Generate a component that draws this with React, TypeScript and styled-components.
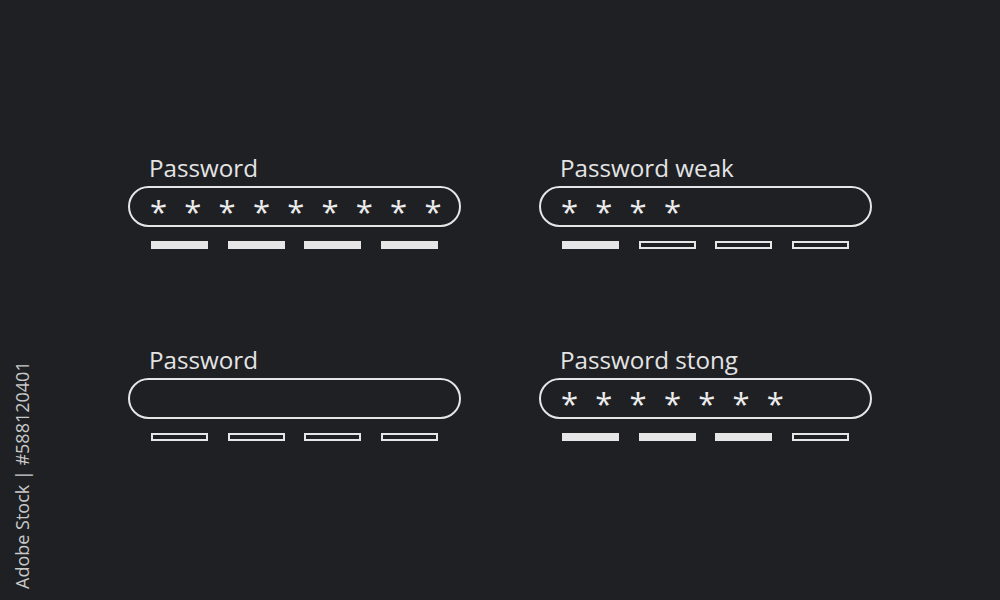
import React from 'react';
import styled, { createGlobalStyle } from 'styled-components';

const GlobalStyle = createGlobalStyle`
  html, body {
    margin: 0;
    padding: 0;
    background: #1f2024;
  }
  body {
    font-family: 'Open Sans', 'Noto Sans', sans-serif;
  }
`;

interface FieldSpec {
  id: string;
  label: string;
  length: number;
  strength: number; // filled segments out of 4
}

const FIELDS: FieldSpec[] = [
  { id: 'full', label: 'Password', length: 9, strength: 4 },
  { id: 'weak', label: 'Password weak', length: 4, strength: 1 },
  { id: 'empty', label: 'Password', length: 0, strength: 0 },
  { id: 'strong', label: 'Password stong', length: 7, strength: 3 },
];

const SEGMENTS = 4;

const Page = styled.div`
  position: relative;
  width: 1000px;
  height: 600px;
  overflow: hidden;
  background: #1f2024;
  box-sizing: border-box;
  padding: 153px 0 0 128px;
`;

const Grid = styled.div`
  display: grid;
  grid-template-columns: 333px 333px;
  column-gap: 78px;
  row-gap: 96px;
`;

const Block = styled.div`
  display: flex;
  flex-direction: column;
`;

const Label = styled.div`
  margin-left: 21px;
  height: 33px;
  font-size: 24.2px;
  line-height: 30px;
  color: #e4e4e4;
`;

const Field = styled.div`
  box-sizing: border-box;
  height: 41px;
  border: 2px solid #e6e6e6;
  border-radius: 21px;
  display: flex;
  align-items: center;
  gap: 20.3px;
  padding: 0 0 0 20px;
`;

const Star = styled.span`
  width: 14px;
  font-size: 31px;
  line-height: 30px;
  height: 22px;
  color: #ececec;
  text-align: center;
`;

const Meter = styled.div`
  display: flex;
  gap: 19.7px;
  margin: 14px 0 0 23px;
`;

const Segment = styled.div<{ $on: boolean }>`
  box-sizing: border-box;
  width: 57px;
  height: 8px;
  border: 2px solid #e6e6e6;
  background: ${p => (p.$on ? '#e6e6e6' : 'transparent')};
`;

const StockId = styled.div`
  position: absolute;
  left: 12px;
  top: 589px;
  transform: rotate(-90deg);
  transform-origin: 0 0;
  white-space: nowrap;
  font-size: 18px;
  line-height: 20px;
  color: #c9c9c9;
`;

const App: React.FC = () => (
  <>
    <GlobalStyle />
    <Page>
      <Grid>
        {FIELDS.map(f => (
          <Block key={f.id}>
            <Label>{f.label}</Label>
            <Field>
              {Array.from({ length: f.length }).map((_, i) => (
                <Star key={i}>*</Star>
              ))}
            </Field>
            <Meter>
              {Array.from({ length: SEGMENTS }).map((_, i) => (
                <Segment key={i} $on={i < f.strength} />
              ))}
            </Meter>
          </Block>
        ))}
      </Grid>
      <StockId>Adobe Stock | #588120401</StockId>
    </Page>
  </>
);

export default App;
